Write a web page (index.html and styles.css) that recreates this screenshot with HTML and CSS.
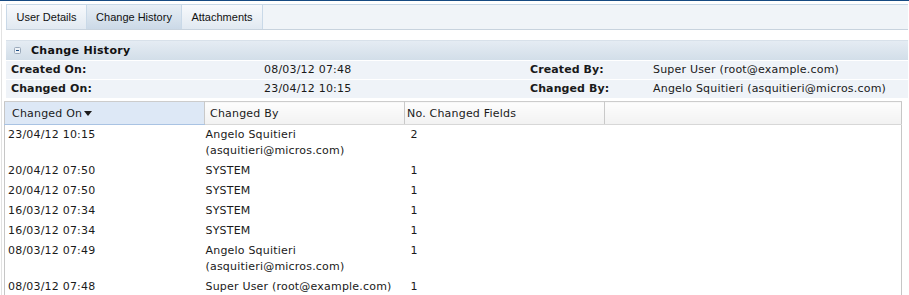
FILE: index.html
```html
<!DOCTYPE html>
<html lang="en">
<head>
    <meta charset="UTF-8">
    <title>Change History</title>
    <link rel="stylesheet" href="styles.css">
</head>
<body>
    <div class="topline"></div>
    <div class="page">
        <div class="tabs">
            <div class="tab tab-user">User Details</div>
            <div class="tab tab-history active">Change History</div>
            <div class="tab tab-attach">Attachments</div>
        </div>

        <div class="section-head">
            <svg class="collapse" width="7" height="7" viewBox="0 0 7 7">
                <rect x="0.5" y="0.5" width="6" height="6" rx="1" fill="#eef2f7" stroke="#9aa9ba"/>
                <line x1="2" y1="3.5" x2="5" y2="3.5" stroke="#1f4f86"/>
            </svg>
            <span>Change History</span>
        </div>

        <div class="info">
            <div class="info-row">
                <div class="label">Created On:</div>
                <div class="value">08/03/12 07:48</div>
                <div class="label">Created By:</div>
                <div class="value">Super User (root@example.com)</div>
            </div>
            <div class="info-row">
                <div class="label">Changed On:</div>
                <div class="value">23/04/12 10:15</div>
                <div class="label">Changed By:</div>
                <div class="value">Angelo Squitieri (asquitieri@micros.com)</div>
            </div>
        </div>

        <table class="grid">
            <colgroup>
                <col class="c-date">
                <col class="c-user">
                <col class="c-count">
                <col>
            </colgroup>
            <thead>
                <tr>
                    <th class="sorted">Changed On<span class="sort-arrow"></span></th>
                    <th class="h-user">Changed By</th>
                    <th class="h-count">No. Changed Fields</th>
                    <th class="filler"></th>
                </tr>
            </thead>
            <tbody>
                <tr><td>23/04/12 10:15</td><td>Angelo Squitieri (asquitieri@micros.com)</td><td>2</td><td></td></tr>
                <tr><td>20/04/12 07:50</td><td>SYSTEM</td><td>1</td><td></td></tr>
                <tr><td>20/04/12 07:50</td><td>SYSTEM</td><td>1</td><td></td></tr>
                <tr><td>16/03/12 07:34</td><td>SYSTEM</td><td>1</td><td></td></tr>
                <tr><td>16/03/12 07:34</td><td>SYSTEM</td><td>1</td><td></td></tr>
                <tr><td>08/03/12 07:49</td><td>Angelo Squitieri (asquitieri@micros.com)</td><td>1</td><td></td></tr>
                <tr><td>08/03/12 07:48</td><td>Super User (root@example.com)</td><td>1</td><td></td></tr>
            </tbody>
        </table>
    </div>
</body>
</html>
```

FILE: styles.css
```css
body {
    margin: 0;
    font-family: 'DejaVu Sans', Verdana, sans-serif;
    font-size: 11px;
    letter-spacing: 0.2px;
    color: #1a1a1a;
    background: #fff;
    overflow: hidden;
}
.topline {
    height: 1px;
    background-color: #164a82;
}
.page {
    margin-left: 1px;
    padding-left: 2px;
    border-left: 1px solid #e2e2e2;
    width: 898px;
}

/* tab strip */
.tabs {
    display: flex;
    margin: 3px 0 0 2px;
    height: 24px;
    background-color: #f0f4f8;
    border-top: 1px solid #c9d9e8;
    border-bottom: 1px solid #c8d3de;
    width: 902px;
}
.tab {
    font-family: 'Liberation Sans', Arial, sans-serif;
    font-size: 11px;
    letter-spacing: 0;
    color: #111;
    line-height: 24px;
    text-align: center;
    border-right: 1px solid #c9d9e8;
    background: linear-gradient(#f7f9fc, #e1e9f1);
}
.tab:first-child {
    border-left: 1px solid #c9d9e8;
}
.tab-user { width: 79px; }
.tab-history { width: 94px; }
.tab-attach { width: 80px; }
.tab.active {
    background: linear-gradient(#e7eef5, #cbd9e7);
}

/* section header */
.section-head {
    display: flex;
    align-items: center;
    gap: 10px;
    margin: 10px 0 0 2px;
    height: 20px;
    padding-left: 8px;
    background: linear-gradient(#e5ecf3, #d2dee9);
    border-top: 1px solid #d8e1ea;
    box-sizing: border-box;
    width: 902px;
    font-weight: bold;
    font-size: 11px;
    letter-spacing: 0.3px;
    color: #111;
}
.collapse {
    display: block;
}

/* info rows */
.info {
    margin-left: 2px;
    width: 902px;
}
.info-row {
    display: grid;
    grid-template-columns: 253px 266px 123px 1fr;
    height: 18px;
    line-height: 18px;
    background-color: #eff3f8;
    border-top: 1px solid #fff;
    padding-left: 5px;
}
.label {
    font-weight: bold;
    letter-spacing: 0.1px;
}

/* history grid */
.grid {
    margin-top: 3px;
    width: 898px;
    border-collapse: collapse;
    table-layout: fixed;
    border-left: 1px solid #c6c6c6;
    border-right: 1px solid #c6c6c6;
}
.c-date, .c-user, .c-count {
    width: 200px;
}
.grid th {
    height: 22px;
    padding: 0 4px 0 7px;
    text-align: left;
    font-weight: normal;
    background: linear-gradient(#fdfdfd, #f2f2f2);
    border-top: 1px solid #cccccc;
    border-bottom: 1px solid #d7d7d7;
    border-right: 1px solid #c9c9c9;
}
.grid th.h-user { padding-left: 5px; }
.grid th.h-count { padding-left: 2px; }
.grid th.sorted {
    background: #dde8f6;
    border-bottom: 1px solid #a9c3e3;
}
.grid th.filler {
    border-right: none;
}
.sort-arrow {
    display: inline-block;
    width: 0;
    height: 0;
    border-left: 4px solid transparent;
    border-right: 4px solid transparent;
    border-top: 5px solid #1a1a1a;
    vertical-align: 1px;
    margin-left: 2px;
}
.grid td {
    padding: 2px 4px 2px 3px;
    line-height: 16px;
    vertical-align: top;
}
.grid td:nth-child(2) {
    padding-left: 1px;
}
.grid td:nth-child(3) {
    padding-left: 6px;
}
.grid tbody tr:first-child td {
    padding-top: 2px;
}
```
